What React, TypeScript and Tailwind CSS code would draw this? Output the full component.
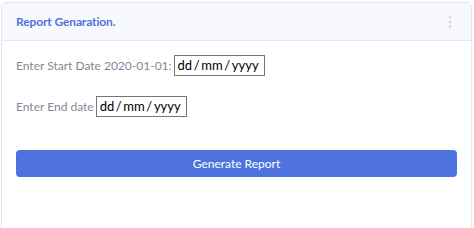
export default function App(): React.JSX.Element {
  return (
    <div className="w-[474px] h-[228px] bg-white overflow-hidden pt-[2px] font-['Lato',sans-serif]">
      <div className="ml-[1px] w-[471px] h-[240px] border border-[#e3e6f0] rounded-[4px] bg-white flex flex-col">
        <div className="h-[38px] bg-[#f8f9fc] border-b border-[#e3e6f0] flex items-center justify-between pl-[14px] pr-[19px] shrink-0">
          <span className="text-[12px] font-bold text-[#4e73df] tracking-[-0.01em]">Report Genaration.</span>
          <svg width="4" height="12" viewBox="0 0 4 12" className="mt-[1px]">
            <circle cx="2" cy="1.5" r="1.2" fill="#d1d3e2" />
            <circle cx="2" cy="6" r="1.2" fill="#d1d3e2" />
            <circle cx="2" cy="10.5" r="1.2" fill="#d1d3e2" />
          </svg>
        </div>
        <div className="px-[14px] pt-[14px] flex flex-col">
          <div className="flex items-center h-[21px] gap-[2px] text-[12px] text-[#858796]">
            <span>Enter Start Date 2020-01-01:</span>
            <div className="w-[91px] h-[21px] border border-[#767676] text-black flex items-center pl-[3px] text-[13px] whitespace-pre">dd{"\u2009/\u2009"}mm{"\u2009/\u2009"}yyyy</div>
          </div>
          <div className="flex items-center h-[21px] gap-[2px] mt-[20px] text-[12px] text-[#858796]">
            <span>Enter End date</span>
            <div className="w-[91px] h-[21px] border border-[#767676] text-black flex items-center pl-[3px] text-[13px] whitespace-pre">dd{"\u2009/\u2009"}mm{"\u2009/\u2009"}yyyy</div>
          </div>
          <button className="mt-[33px] h-[27px] w-full rounded-[4px] bg-[#4e73df] text-white text-[12px] flex items-center justify-center">
            Generate Report
          </button>
        </div>
      </div>
    </div>
  );
}
